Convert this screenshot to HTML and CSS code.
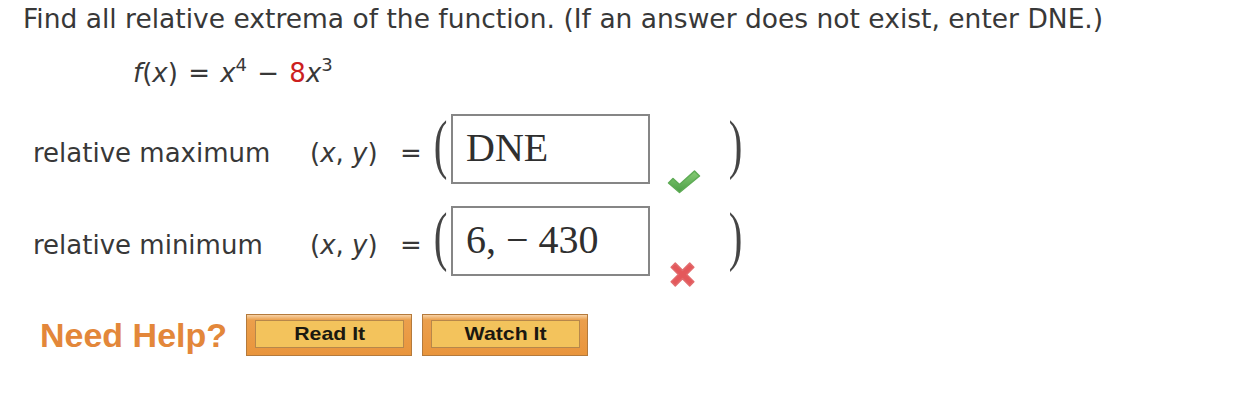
FILE: index.html
```html
<!DOCTYPE html>
<html>
<head>
<meta charset="utf-8">
<link rel="stylesheet" href="styles.css">
</head>
<body>
<div class="page">
  <p class="question">Find all relative extrema of the function. (If an answer does not exist, enter DNE.)</p>
  <div class="formula"><i>f</i>(<i>x</i>) <span class="op">=</span> <i>x</i><sup>4</sup> <span class="op">−</span> <span class="red">8</span><i>x</i><sup>3</sup></div>

  <div class="row row-max">
    <span class="label">relative maximum</span>
    <span class="xy">(<i>x</i>, <i>y</i>)</span>
    <span class="eq">=</span>
    <span class="paren">(</span>
    <span class="box">DNE</span>
    <span class="mark mark-ok">
      <svg width="34" height="25" viewBox="0 0 34 25">
        <defs>
          <linearGradient id="g" x1="0" y1="0" x2="0" y2="1">
            <stop offset="0" stop-color="#86cc74"/>
            <stop offset="1" stop-color="#4c9f47"/>
          </linearGradient>
        </defs>
        <path d="M1.5 14 L6 9.5 L12.5 15.5 L27.5 2 L32.5 7 L12.5 23.5 Z" fill="url(#g)" stroke="#5eab55" stroke-width="1.5" stroke-linejoin="round"/>
      </svg>
    </span>
    <span class="paren">)</span>
  </div>

  <div class="row row-min">
    <span class="label">relative minimum</span>
    <span class="xy">(<i>x</i>, <i>y</i>)</span>
    <span class="eq">=</span>
    <span class="paren">(</span>
    <span class="box">6, − 430</span>
    <span class="mark mark-bad">
      <svg width="31" height="29" viewBox="0 0 30 28">
        <path d="M4 7 L8 3 L15 10 L22 3 L26 7 L19 14 L26 21 L22 25 L15 18 L8 25 L4 21 L11 14 Z" fill="#e4585b" stroke="#e26a6c" stroke-width="1.4" stroke-linejoin="round"/>
      </svg>
    </span>
    <span class="paren">)</span>
  </div>

  <div class="help">
    <span class="need">Need Help?</span>
    <span class="btn"><span class="btn-in"><span class="btn-txt">Read It</span></span></span>
    <span class="btn"><span class="btn-in"><span class="btn-txt">Watch It</span></span></span>
  </div>
</div>
</body>
</html>
```

FILE: styles.css
```css
html, body {
  margin: 0;
  padding: 0;
  background: #ffffff;
}

.page {
  font-family: "DejaVu Sans", Verdana, sans-serif;
  color: #383838;
  font-size: 26px;
}

.question {
  margin: 0;
  padding: 4px 0 0 23px;
  font-size: 26.5px;
  line-height: 30px;
}

.formula {
  padding: 22px 0 0 133px;
  line-height: 34px;
  height: 34px;
}

.formula .op {
  margin: 0 2px;
}

.formula sup {
  font-size: 18px;
  line-height: 0;
  vertical-align: 11px;
}

.red {
  color: #cc1f1f;
}

.row {
  display: flex;
  align-items: center;
  height: 70px;
  padding-left: 33px;
}

.row-max {
  margin-top: 24px;
}

.row-min {
  margin-top: 22px;
}

.label,
.xy,
.eq {
  padding-top: 7px;
}

.label {
  width: 277px;
}

.xy {
  width: 90px;
}

.eq {
  width: 30px;
}

.paren {
  font-family: "Liberation Serif", "Times New Roman", serif;
  font-size: 66px;
  line-height: 1;
  color: #454545;
  transform: scaleX(0.62);
  width: 20px;
  padding-bottom: 10px;
  text-align: center;
}

.box {
  box-sizing: border-box;
  width: 199px;
  height: 70px;
  margin-left: 1px;
  border: 2px solid #868686;
  padding-left: 13px;
  font-family: "Liberation Serif", "Times New Roman", serif;
  font-size: 40px;
  line-height: 64px;
  color: #2f2f2f;
}

.mark {
  width: 75px;
  align-self: flex-end;
  padding-left: 17px;
  box-sizing: border-box;
  display: flex;
}

.mark-ok {
  margin-bottom: -10px;
}

.mark-bad {
  margin-bottom: -13px;
}

.help {
  display: flex;
  align-items: center;
  margin-top: 38px;
  padding-left: 40px;
  gap: 10px;
}

.need {
  font-family: "Liberation Sans", Arial, sans-serif;
  font-weight: bold;
  font-size: 34px;
  color: #e3873a;
  width: 196px;
}

.btn {
  box-sizing: border-box;
  width: 166px;
  height: 42px;
  border: 1px solid #b47a3c;
  background: linear-gradient(#f7d2a6 0, #eb9f4c 5px, #e9953c 100%);
  padding: 5px 7px 7px 8px;
  display: flex;
}

.btn-in {
  flex: 1;
  border: 1px solid #b7874a;
  background: #f3c35c;
  display: flex;
  align-items: center;
  justify-content: center;
}

.btn-txt {
  font-family: "Liberation Sans", Arial, sans-serif;
  font-weight: bold;
  font-size: 19px;
  color: #1a1810;
  transform: scaleX(1.12);
}
```
